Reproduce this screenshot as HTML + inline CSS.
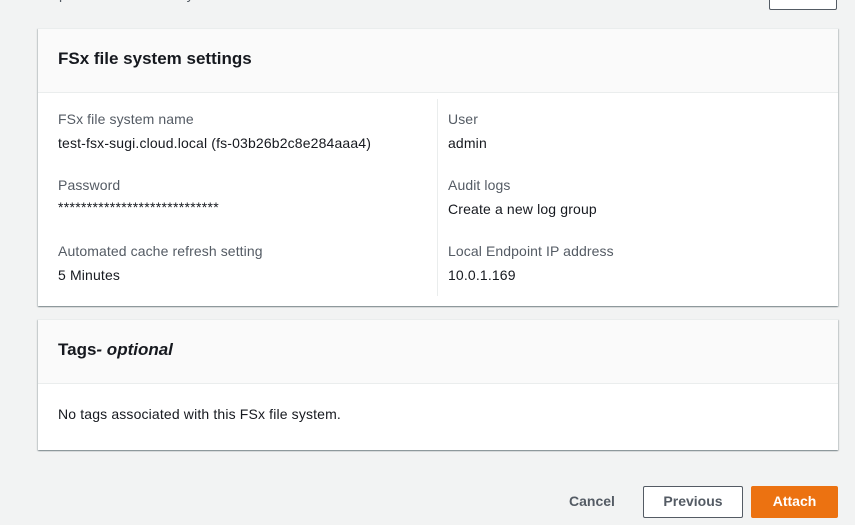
<!DOCTYPE html>
<html><head><style>
body{margin:0;width:855px;height:525px;background:#f2f3f3;font-family:"Liberation Sans",Arial,sans-serif;position:relative;overflow:hidden;color:#16191f}
.abs{position:absolute}
.card{position:absolute;left:38px;width:800px;background:#fff;box-shadow:0 1px 1px 0 rgba(0,28,36,.3),1px 1px 1px 0 rgba(0,28,36,.15),-1px 1px 1px 0 rgba(0,28,36,.15);border-top:1px solid #eaeded}
.hdr{background:#fafafa;border-bottom:1px solid #eaeded;position:relative}
.hdr h2{position:absolute;left:20px;margin:0;font-size:17px;font-weight:bold}
.lbl{position:absolute;font-size:14px;color:#545b64;letter-spacing:0.1px}
.val{position:absolute;font-size:14px;color:#16191f;letter-spacing:0.15px}
.btn{position:absolute;font-size:14px;font-weight:bold;box-sizing:border-box;text-align:center;line-height:28px;height:32px;border-radius:2px}
</style></head><body>
<div class="abs" style="left:38px;top:-14px;font-size:14px;color:#545b64">Step 4: Attach FSx file system</div>
<div class="abs" style="left:769px;top:-10px;width:68px;height:20px;border:1px solid #545b64;background:#fff;border-radius:2px;box-sizing:border-box"></div>

<div class="card" style="top:28px;height:277px">
  <div class="hdr" style="height:63px"><h2 style="top:20px">FSx file system settings</h2></div>
  <div class="abs" style="left:399px;top:70px;width:1px;height:197px;background:#eaeded"></div>
  <div class="lbl" style="left:20px;top:82px">FSx file system name</div>
  <div class="val" style="left:20px;top:106px">test-fsx-sugi.cloud.local (fs-03b26b2c8e284aaa4)</div>
  <div class="lbl" style="left:20px;top:148px">Password</div>
  <div class="val" style="left:20px;top:170px;font-size:14px;letter-spacing:0.3px">****************************</div>
  <div class="lbl" style="left:20px;top:214px">Automated cache refresh setting</div>
  <div class="val" style="left:20px;top:238px">5 Minutes</div>
  <div class="lbl" style="left:410px;top:82px">User</div>
  <div class="val" style="left:410px;top:106px">admin</div>
  <div class="lbl" style="left:410px;top:148px">Audit logs</div>
  <div class="val" style="left:410px;top:172px">Create a new log group</div>
  <div class="lbl" style="left:410px;top:214px">Local Endpoint IP address</div>
  <div class="val" style="left:410px;top:238px">10.0.1.169</div>
</div>

<div class="card" style="top:319px;height:130px">
  <div class="hdr" style="height:63px"><h2 style="top:20px">Tags<i>- optional</i></h2></div>
  <div class="val" style="left:20px;top:86px">No tags associated with this FSx file system.</div>
</div>

<div class="abs" style="left:569px;top:493px;font-size:14px;font-weight:bold;color:#545b64">Cancel</div>
<div class="btn" style="left:643px;top:486px;width:100px;border:1px solid #545b64;background:#fff;color:#545b64">Previous</div>
<div class="btn" style="left:751px;top:486px;width:87px;border:1px solid #ec7211;background:#ec7211;color:#fff">Attach</div>
</body></html>
